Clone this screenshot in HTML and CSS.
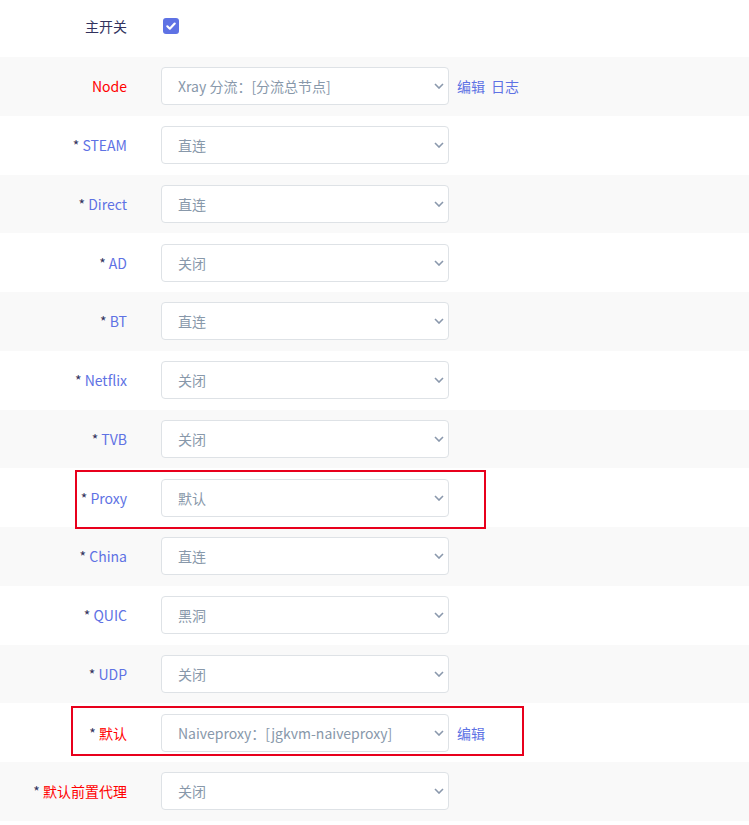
FILE: index.html
```html
<!DOCTYPE html>
<html lang="zh">
<head>
<meta charset="utf-8">
<link rel="stylesheet" href="styles.css">
</head>
<body>
<div class="form">
  <div class="row first">
    <div class="label dark">主开关</div>
    <div class="field">
      <span class="checkbox"><svg width="16" height="16" viewBox="0 0 16 16"><path d="M4.3 8.3 L6.8 10.7 L11.7 5.6" fill="none" stroke="#fff" stroke-width="2.2" stroke-linecap="round" stroke-linejoin="round"/></svg></span>
    </div>
  </div>
  <div class="row gray">
    <div class="label red">Node</div>
    <div class="field">
      <div class="select"><span>Xray 分流：[分流总节点]</span><svg class="chev" width="10" height="6" viewBox="0 0 10 6"><path d="M1 1 L5 5 L9 1" fill="none" stroke="#8a98ac" stroke-width="1.6"/></svg></div>
      <a class="link">编辑</a><a class="link">日志</a>
    </div>
  </div>
  <div class="row">
    <div class="label"><span class="star">*</span> <span class="blue">STEAM</span></div>
    <div class="field"><div class="select"><span>直连</span><svg class="chev" width="10" height="6" viewBox="0 0 10 6"><path d="M1 1 L5 5 L9 1" fill="none" stroke="#8a98ac" stroke-width="1.6"/></svg></div></div>
  </div>
  <div class="row gray">
    <div class="label"><span class="star">*</span> <span class="blue">Direct</span></div>
    <div class="field"><div class="select"><span>直连</span><svg class="chev" width="10" height="6" viewBox="0 0 10 6"><path d="M1 1 L5 5 L9 1" fill="none" stroke="#8a98ac" stroke-width="1.6"/></svg></div></div>
  </div>
  <div class="row">
    <div class="label"><span class="star">*</span> <span class="blue">AD</span></div>
    <div class="field"><div class="select"><span>关闭</span><svg class="chev" width="10" height="6" viewBox="0 0 10 6"><path d="M1 1 L5 5 L9 1" fill="none" stroke="#8a98ac" stroke-width="1.6"/></svg></div></div>
  </div>
  <div class="row gray">
    <div class="label"><span class="star">*</span> <span class="blue">BT</span></div>
    <div class="field"><div class="select"><span>直连</span><svg class="chev" width="10" height="6" viewBox="0 0 10 6"><path d="M1 1 L5 5 L9 1" fill="none" stroke="#8a98ac" stroke-width="1.6"/></svg></div></div>
  </div>
  <div class="row">
    <div class="label"><span class="star">*</span> <span class="blue">Netflix</span></div>
    <div class="field"><div class="select"><span>关闭</span><svg class="chev" width="10" height="6" viewBox="0 0 10 6"><path d="M1 1 L5 5 L9 1" fill="none" stroke="#8a98ac" stroke-width="1.6"/></svg></div></div>
  </div>
  <div class="row gray">
    <div class="label"><span class="star">*</span> <span class="blue">TVB</span></div>
    <div class="field"><div class="select"><span>关闭</span><svg class="chev" width="10" height="6" viewBox="0 0 10 6"><path d="M1 1 L5 5 L9 1" fill="none" stroke="#8a98ac" stroke-width="1.6"/></svg></div></div>
  </div>
  <div class="row">
    <div class="label"><span class="star">*</span> <span class="blue">Proxy</span></div>
    <div class="field"><div class="select"><span>默认</span><svg class="chev" width="10" height="6" viewBox="0 0 10 6"><path d="M1 1 L5 5 L9 1" fill="none" stroke="#8a98ac" stroke-width="1.6"/></svg></div></div>
    <div class="mark mark-proxy"></div>
  </div>
  <div class="row gray">
    <div class="label"><span class="star">*</span> <span class="blue">China</span></div>
    <div class="field"><div class="select"><span>直连</span><svg class="chev" width="10" height="6" viewBox="0 0 10 6"><path d="M1 1 L5 5 L9 1" fill="none" stroke="#8a98ac" stroke-width="1.6"/></svg></div></div>
  </div>
  <div class="row">
    <div class="label"><span class="star">*</span> <span class="blue">QUIC</span></div>
    <div class="field"><div class="select"><span>黑洞</span><svg class="chev" width="10" height="6" viewBox="0 0 10 6"><path d="M1 1 L5 5 L9 1" fill="none" stroke="#8a98ac" stroke-width="1.6"/></svg></div></div>
  </div>
  <div class="row gray">
    <div class="label"><span class="star">*</span> <span class="blue">UDP</span></div>
    <div class="field"><div class="select"><span>关闭</span><svg class="chev" width="10" height="6" viewBox="0 0 10 6"><path d="M1 1 L5 5 L9 1" fill="none" stroke="#8a98ac" stroke-width="1.6"/></svg></div></div>
  </div>
  <div class="row">
    <div class="label"><span class="star">*</span> <span class="red">默认</span></div>
    <div class="field">
      <div class="select"><span>Naiveproxy：[jgkvm-naiveproxy]</span><svg class="chev" width="10" height="6" viewBox="0 0 10 6"><path d="M1 1 L5 5 L9 1" fill="none" stroke="#8a98ac" stroke-width="1.6"/></svg></div>
      <a class="link">编辑</a>
    </div>
    <div class="mark mark-default"></div>
  </div>
  <div class="row gray">
    <div class="label"><span class="star">*</span> <span class="red">默认前置代理</span></div>
    <div class="field"><div class="select"><span>关闭</span><svg class="chev" width="10" height="6" viewBox="0 0 10 6"><path d="M1 1 L5 5 L9 1" fill="none" stroke="#8a98ac" stroke-width="1.6"/></svg></div></div>
  </div>
</div>
</body>
</html>
```

FILE: styles.css
```css
html, body {
  margin: 0;
  padding: 0;
  background: #ffffff;
}
body {
  font-family: "Noto Sans CJK SC", sans-serif;
  font-size: 14px;
  color: #32325d;
}
.form {
  display: flex;
  flex-direction: column;
}
.row {
  position: relative;
  display: flex;
  align-items: center;
  height: 58.75px;
  gap: 34px;
}
.row.first {
  height: 57px;
  padding-bottom: 5px;
  box-sizing: border-box;
}
.row.gray {
  background: #f9f9f9;
}
.label {
  width: 127px;
  flex: none;
  text-align: right;
  white-space: nowrap;
  line-height: 20px;
}
.dark { color: #32325d; }
.star { color: #32325d; }
.blue { color: #5e72e4; }
.red { color: #ff0000; }
.field {
  display: flex;
  align-items: center;
  gap: 8px;
}
.checkbox {
  width: 16px;
  height: 16px;
  margin-left: 2px;
  border-radius: 3px;
  background: #5e72e4;
  display: flex;
}
.select {
  width: 288px;
  height: 38px;
  box-sizing: border-box;
  border: 1px solid #dee2e6;
  border-radius: 4px;
  background: #ffffff;
  display: flex;
  align-items: center;
  justify-content: space-between;
  padding: 0 4px 0 16px;
  color: #8898aa;
}
.chev {
  display: block;
}
.link {
  color: #5e72e4;
  cursor: pointer;
}
.link + .link {
  margin-left: -2px;
}
.mark {
  position: absolute;
  z-index: 2;
  border: 2px solid #e8001c;
  box-sizing: border-box;
  pointer-events: none;
}
.mark-proxy {
  left: 75px;
  width: 411px;
  top: 2px;
  height: 59px;
}
.mark-default {
  left: 71px;
  width: 453px;
  top: 3px;
  height: 50px;
}
```
